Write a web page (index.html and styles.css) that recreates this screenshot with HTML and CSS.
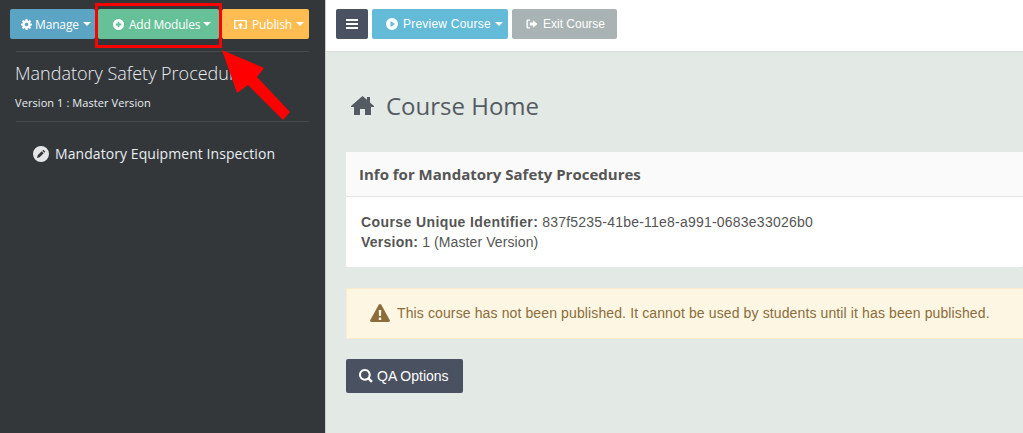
FILE: index.html
```html
<!DOCTYPE html>
<html lang="en">
<head>
    <meta charset="UTF-8">
    <title>Course Home</title>
    <link rel="stylesheet" href="styles.css">
</head>
<body>
    <div class="sidebar">
        <div class="side-buttons">
            <div class="btn btn-manage">
                <svg class="icon" width="11" height="11" viewBox="0 0 24 24"><path fill="#fff" fill-rule="evenodd" d="M10 0h4l.6 3.400 1.900.8L19.200 2.200 22 5l-2 2.800.8 1.900L24 10.300v3.600l-3.200.6-.8 1.900 2 2.700-2.800 2.800-2.700-2-1.900.8L14 24h-4l-.6-3.300-1.900-.8L4.800 22 2 19.100l2-2.700-.8-1.900L0 13.900v-3.600l3.200-.6.8-1.900L2 5l2.800-2.800L7.500 4.200l1.900-.8zM12 8a4 4 0 1 0 0 8 4 4 0 0 0 0-8z"/></svg>
                Manage <span class="caret"></span>
            </div>
            <div class="btn btn-add">
                <svg class="icon" width="11" height="11" viewBox="0 0 24 24"><path fill="#fff" fill-rule="evenodd" d="M12 0a12 12 0 1 0 0 24 12 12 0 0 0 0-24zM10 6h4v4h4v4h-4v4h-4v-4H6v-4h4z"/></svg>
                Add Modules <span class="caret"></span>
            </div>
            <div class="btn btn-publish">
                <svg class="icon" width="13" height="11" viewBox="0 0 28 24"><path fill="#fff" fill-rule="evenodd" d="M0 2h28v20H19v-3h6V5H3v14h6v3H0zM14 8l6 6h-4v8h-4v-8H8z"/></svg>
                Publish <span class="caret"></span>
            </div>
        </div>
        <div class="side-course">
            <div class="course-title">Mandatory Safety Procedures</div>
            <div class="course-version">Version 1 : Master Version</div>
        </div>
        <div class="module">
            <svg width="16" height="16" viewBox="0 0 24 24"><path fill="#e6e6e6" fill-rule="evenodd" d="M12 0a12 12 0 1 0 0 24 12 12 0 0 0 0-24zM15.500 5.500l3 3-1.500 1.500-3-3zM13 8l3 3-6 6-4 1 1-4z"/></svg>
            <span>Mandatory Equipment Inspection</span>
        </div>
    </div>

    <div class="main">
        <div class="topbar">
            <div class="btn btn-dark btn-menu">
                <svg width="12" height="12" viewBox="0 0 12 12"><path fill="#fff" d="M0 1h12v2H0zM0 5h12v2H0zM0 9h12v2H0z"/></svg>
            </div>
            <div class="btn btn-preview">
                <svg class="icon" width="12" height="12" viewBox="0 0 24 24"><path fill="#fff" fill-rule="evenodd" d="M12 0a12 12 0 1 0 0 24 12 12 0 0 0 0-24zM9 6l9 6-9 6z"/></svg>
                Preview Course <span class="caret"></span>
            </div>
            <div class="btn btn-exit">
                <svg class="icon" width="12" height="12" viewBox="0 0 26 24"><path fill="#fff" d="M9 2H4a3 3 0 0 0-3 3v14a3 3 0 0 0 3 3h5v-3H4V5h5zM15 4l10 8-10 8v-5H8V9h7z"/></svg>
                Exit Course
            </div>
        </div>
        <div class="content">
            <h1 class="page-title">
                <svg width="23" height="19" viewBox="0 0 23 19"><path fill="#555b63" d="M11.500 0L16 3.800V1h3v5.400L23 10v1h-3v8h-6v-6H9v6H3v-8H0v-1z"/></svg>
                Course Home
            </h1>
            <div class="card">
                <div class="card-head">Info for Mandatory Safety Procedures</div>
                <div class="card-body">
                    <div class="row-id"><b>Course Unique Identifier:</b> <span>837f5235-41be-11e8-a991-0683e33026b0</span></div>
                    <div class="row-version"><b>Version:</b> <span>1 (Master Version)</span></div>
                </div>
            </div>
            <div class="alert">
                <svg width="20" height="18" viewBox="0 0 20 18"><path fill="#8a6d3b" fill-rule="evenodd" d="M10 0c.6 0 1 .3 1.300.8l8.500 15.400c.5 1-.2 1.800-1.200 1.800H1.400c-1 0-1.700-.8-1.200-1.800L8.700.8C9 .3 9.400 0 10 0zM8.700 6l.3 6h2l.3-6zM8.800 13.500v2.500h2.400v-2.500z"/></svg>
                <span>This course has not been published. It cannot be used by students until it has been published.</span>
            </div>
            <div class="btn btn-dark btn-qa">
                <svg class="icon" width="14" height="14" viewBox="0 0 24 24"><path fill="#fff" fill-rule="evenodd" d="M10 0a10 10 0 1 0 5.600 18.300l5.200 5.200 2.900-2.900-5.200-5.200A10 10 0 0 0 10 0zm0 3.500a6.500 6.500 0 1 1 0 13 6.500 6.500 0 0 1 0-13z"/></svg>
                QA Options
            </div>
        </div>
    </div>

    <div class="callout-box"></div>
    <svg class="callout-arrow" width="72" height="72" viewBox="0 0 72 72"><path fill="#f00" d="M1 0L43 18 36 27 69 62 62 70 27 35 16 43z"/></svg>
</body>
</html>
```

FILE: styles.css
```css
* {
    box-sizing: border-box;
}
html, body {
    height: 100%;
}
body {
    margin: 0;
    display: flex;
    overflow: hidden;
    position: relative;
    font-family: "Liberation Sans", Arial, sans-serif;
    font-size: 14px;
    color: #555;
    background: #e3e9e5;
}
.btn {
    display: inline-flex;
    align-items: center;
    height: 30px;
    border-radius: 2px;
    color: #fff;
    font-size: 12px;
    white-space: nowrap;
}
.icon {
    margin-right: 4px;
    flex: none;
}
.caret {
    display: inline-block;
    width: 0;
    height: 0;
    margin-left: 4px;
    border-top: 4px solid #fff;
    border-left: 4px solid transparent;
    border-right: 4px solid transparent;
}

.sidebar {
    width: 326px;
    flex: none;
    background: #34373a;
    border-right: 1px solid #ccc;
    font-family: "Open Sans", sans-serif;
    color: #e8eef2;
}
.side-buttons {
    display: flex;
    gap: 3px;
    padding: 9px 0 0 10px;
}
.side-buttons .btn {
    letter-spacing: -0.15px;
}
.btn-manage {
    width: 85px;
    padding-left: 11px;
    background: #5ba4c4;
}
.btn-manage .icon {
    margin-right: 3px;
}
.side-buttons .btn-add {
    width: 121px;
    padding-left: 15px;
    background: #66c199;
    letter-spacing: -0.22px;
}
.btn-add .icon {
    margin-right: 5px;
}
.btn-add .caret {
    margin-left: 3px;
}
.btn-publish {
    width: 87px;
    padding-left: 12px;
    background: #ffbc50;
}
.btn-publish .icon {
    margin-right: 5px;
}
.side-course {
    margin: 12px 16px 0 16px;
    border-top: 1px solid #47494c;
    border-bottom: 1px solid #47494c;
    height: 71px;
}
.course-title {
    font-size: 18px;
    font-weight: 300;
    line-height: 24px;
    margin-top: 9px;
    margin-left: -1px;
}
.course-version {
    font-size: 11px;
    line-height: 16px;
    margin-top: 10px;
    margin-left: -1px;
    letter-spacing: 0.08px;
}
.module {
    display: flex;
    align-items: center;
    gap: 6px;
    margin: 22px 0 0 33px;
    font-size: 14px;
    line-height: 20px;
    letter-spacing: 0.07px;
}

.main {
    flex: 1;
    min-width: 0;
}
.topbar {
    display: flex;
    gap: 4px;
    height: 52px;
    padding: 9px 0 0 10px;
    background: #fff;
    border-bottom: 1px solid #d9dcdc;
}
.btn-dark {
    background: #4a5160;
}
.btn-menu {
    width: 32px;
    justify-content: center;
}
.btn-preview {
    width: 136px;
    padding-left: 14px;
    background: #63bbd7;
    letter-spacing: 0.22px;
}
.btn-preview .icon {
    margin-right: 5px;
}
.btn-exit {
    width: 105px;
    padding-left: 14px;
    background: #a9b3b3;
}
.btn-exit .icon {
    margin-right: 5px;
}
.content {
    padding: 0 0 0 20px;
}
.page-title {
    display: flex;
    align-items: center;
    gap: 12px;
    margin: 0 0 29px 0;
    padding: 36px 0 0 5px;
    height: 71px;
    font-family: "Open Sans", sans-serif;
    font-size: 24px;
    font-weight: 400;
    line-height: 30px;
    color: #555b63;
}
.card {
    height: 115px;
    background: #fff;
    border-radius: 2px;
}
.card-head {
    height: 45px;
    padding: 0 13px;
    background: #fafafa;
    border-bottom: 1px solid #e2e2e2;
    font-family: "Open Sans", sans-serif;
    font-size: 15px;
    font-weight: 700;
    line-height: 45px;
}
.card-body {
    padding: 15px 15px;
    font-size: 14px;
    line-height: 20px;
}
.row-id b {
    letter-spacing: 0.4px;
}
.row-id span {
    letter-spacing: 0.22px;
}
.row-version b {
    letter-spacing: 0.25px;
}
.row-version span {
    letter-spacing: 0.1px;
}
.alert {
    display: flex;
    align-items: center;
    gap: 7px;
    height: 51px;
    margin-top: 21px;
    padding: 0 0 2px 23px;
    background: #fdf6e3;
    border: 1px solid #faebcc;
    border-right: none;
    color: #8a6d3b;
    white-space: nowrap;
    letter-spacing: 0.12px;
}
.btn-qa {
    width: 117px;
    height: 34px;
    margin-top: 20px;
    padding-left: 13px;
    font-size: 14px;
}

.callout-box {
    position: absolute;
    left: 95px;
    top: 3px;
    width: 127px;
    height: 45px;
    border: 3px solid #f00;
}
.callout-arrow {
    position: absolute;
    left: 221px;
    top: 50px;
}
```
